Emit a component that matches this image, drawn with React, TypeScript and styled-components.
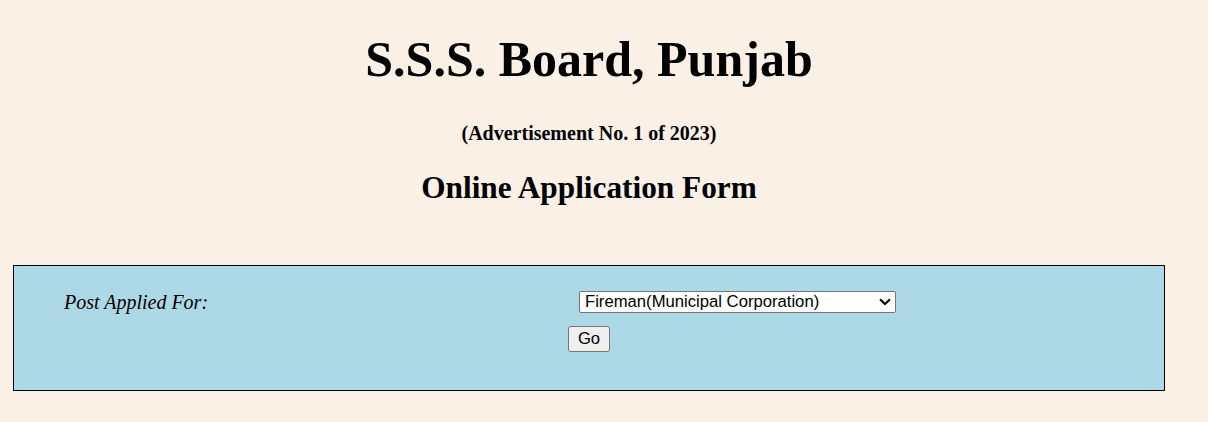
import React from 'react'
import styled, { createGlobalStyle } from 'styled-components'

const GlobalStyle = createGlobalStyle`
  html, body {
    margin: 0;
    padding: 0;
    background: #faf0e6;
  }
  body {
    font-family: "Liberation Serif", "Times New Roman", serif;
    color: #000;
  }
`

const posts = [
  'Fireman(Municipal Corporation)',
  'Fire Station Officer',
  'Clerk',
  'Junior Assistant',
]

const Chevron = () => (
  <ChevronIcon width='12' height='8' viewBox='0 0 12 8' aria-hidden='true'>
    <path d='M1 1.2 L6 6 L11 1.2' fill='none' stroke='#000' strokeWidth='2' />
  </ChevronIcon>
)

const App = () => {
  return (
    <>
      <GlobalStyle />
      <Page>
        <Header>
          <Title>S.S.S. Board, Punjab</Title>
          <Advert>(Advertisement No. 1 of 2023)</Advert>
          <FormTitle>Online Application Form</FormTitle>
        </Header>

        <Panel>
          <FormGrid>
            <Label htmlFor='post'>Post Applied For:</Label>
            <Field>
              <SelectWrap>
                <PostSelect id='post' defaultValue={posts[0]}>
                  {posts.map((p) => (
                    <option key={p} value={p}>
                      {p}
                    </option>
                  ))}
                </PostSelect>
                <Chevron />
              </SelectWrap>
            </Field>
            <Actions>
              <GoButton type='button'>Go</GoButton>
            </Actions>
          </FormGrid>
        </Panel>
      </Page>
    </>
  )
}

const Page = styled.main`
  width: 1152px;
  margin-left: 13px;
  padding-top: 31px;
`

const Header = styled.header`
  display: flex;
  flex-direction: column;
  align-items: center;
  text-align: center;
`

const Title = styled.h1`
  margin: 0 0 33px;
  font-size: 50px;
  line-height: 1.15;
  font-weight: bold;
`

const Advert = styled.h4`
  margin: 0 0 25px;
  font-size: 20px;
  line-height: 1.15;
  font-weight: bold;
`

const FormTitle = styled.h2`
  margin: 0 0 59.5px;
  font-size: 31.3px;
  line-height: 1.15;
  font-weight: bold;
`

const Panel = styled.section`
  box-sizing: border-box;
  width: 1152px;
  height: 126px;
  background: #add8e6;
  border: 1px solid #000;
  padding-top: 25px;
`

const FormGrid = styled.div`
  display: grid;
  grid-template-columns: 565px 1fr;
  row-gap: 12px;
`

const Label = styled.label`
  align-self: center;
  padding-left: 50px;
  font-size: 20px;
  font-style: italic;
  line-height: 1.15;
`

const Field = styled.div`
  display: flex;
  align-items: center;
`

const SelectWrap = styled.div`
  position: relative;
  display: inline-flex;
`

const PostSelect = styled.select`
  appearance: none;
  box-sizing: border-box;
  width: 317px;
  height: 22px;
  margin: 0;
  padding: 0 24px 0 5px;
  font-family: "Liberation Sans", Arial, sans-serif;
  font-size: 16.67px;
  line-height: 20px;
  background: #fff;
  color: #000;
  border: 1px solid #767676;
  border-radius: 2px;
`

const ChevronIcon = styled.svg`
  position: absolute;
  right: 5px;
  top: 7px;
  pointer-events: none;
`

const Actions = styled.div`
  grid-column: 1 / -1;
  display: flex;
  justify-content: center;
`

const GoButton = styled.button`
  box-sizing: border-box;
  width: 42px;
  height: 26px;
  padding: 0;
  font-family: "Liberation Sans", Arial, sans-serif;
  font-size: 16.67px;
  color: #000;
  background: #efefef;
  border: 1px solid #767676;
  border-radius: 3px;
`

export default App
